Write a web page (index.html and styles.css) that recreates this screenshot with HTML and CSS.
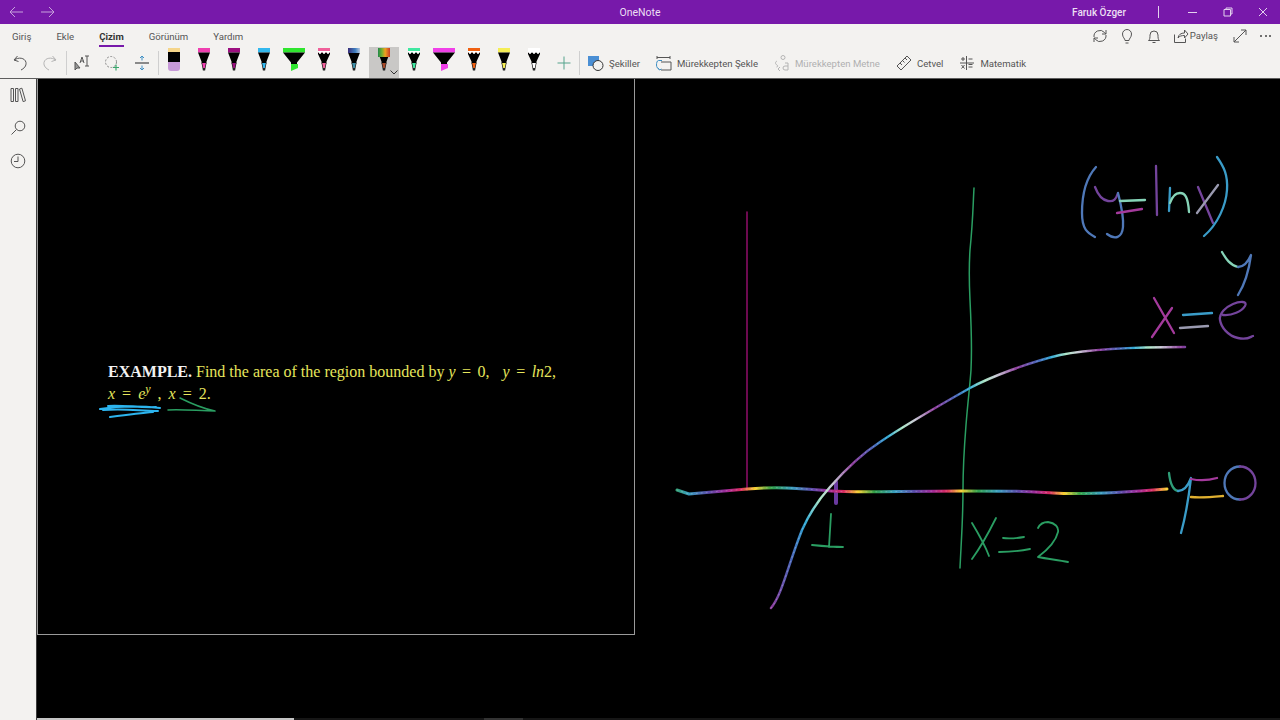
FILE: index.html
```html
<!DOCTYPE html>
<html lang="tr">
<head>
  <meta charset="UTF-8">
  <title>OneNote</title>
  <link rel="stylesheet" href="styles.css">
</head>
<body>
  <!-- shared shapes for the pen row -->
  <svg class="defs" width="0" height="0">
    <defs>
      <symbol id="pen" viewBox="0 0 24 24">
        <rect x="6" y="0" width="12" height="4.5" fill="currentColor"/>
        <path d="M6 4.5h12l-3.5 9v2h-5v-2z" fill="#000"/>
        <path d="M9.5 15h5l-1.400 7.500h-2.200z" fill="#222"/>
        <path d="M10.200 15h3.600l-1 5h-1.600z" fill="currentColor"/>
      </symbol>
      <symbol id="pen-glitter" viewBox="0 0 24 24">
        <rect x="6" y="0" width="12" height="5" fill="currentColor"/>
        <path d="M6 4l2 2 2-2 2 2 2-2 2 2 2-2v2l-3.500 7.500v2h-5v-2L6 6z" fill="#000"/>
        <path d="M6 4l2 2 2-2 2 2 2-2 2 2 2-2v-1H6z" fill="#fff"/>
        <path d="M9.500 15h5l-1.400 7.500h-2.200z" fill="#222"/>
        <path d="M10.200 15h3.600l-1 5h-1.600z" fill="currentColor"/>
      </symbol>
      <symbol id="marker" viewBox="0 0 24 24">
        <rect x="1" y="0" width="22" height="4.500" fill="currentColor"/>
        <path d="M1 4.500h22l-8 10v2H9v-2z" fill="#000"/>
        <path d="M9 16h7v4l-7 3z" fill="currentColor"/>
      </symbol>
      <linearGradient id="cap-rainbow" x1="0" x2="1" y1="0" y2="0">
        <stop offset="0" stop-color="#1f8a4a"/>
        <stop offset=".35" stop-color="#7fae2e"/>
        <stop offset=".6" stop-color="#f0a020"/>
        <stop offset="1" stop-color="#c83a28"/>
      </linearGradient>
      <linearGradient id="cap-galaxy" x1="0" x2="1" y1="0" y2="0">
        <stop offset="0" stop-color="#3a2f7a"/>
        <stop offset=".6" stop-color="#3f7fc0"/>
        <stop offset="1" stop-color="#b8c8e0"/>
      </linearGradient>
    </defs>
  </svg>

  <header class="titlebar">
    <div class="title-left">
      <svg class="cap-icon" viewBox="0 0 16 16"><path d="M15 8H2M7 3L2 8l5 5"/></svg>
      <svg class="cap-icon" viewBox="0 0 16 16"><path d="M1 8h13M9 3l5 5-5 5"/></svg>
    </div>
    <div class="title-name">OneNote</div>
    <div class="title-right">
      <span class="user-name">Faruk Özger</span>
      <span class="title-sep"></span>
      <button class="win-btn"><svg viewBox="0 0 10 10"><path d="M0 5.500h9"/></svg></button>
      <button class="win-btn"><svg viewBox="0 0 10 10"><path d="M1 2.500h6.500V9H1zM3 2.500V1h6v6H7.500"/></svg></button>
      <button class="win-btn"><svg viewBox="0 0 10 10"><path d="M1 1l8 8M9 1L1 9"/></svg></button>
    </div>
  </header>

  <nav class="tabs">
    <a class="tab">Giriş</a>
    <a class="tab">Ekle</a>
    <a class="tab active">Çizim</a>
    <a class="tab">Görünüm</a>
    <a class="tab">Yardım</a>
    <div class="tab-tools">
      <svg class="ico tab-ico" viewBox="0 0 16 16"><path d="M2 9a6 6 0 0 1 10.500-4.500L14 6M14 7a6 6 0 0 1-10.500 4.500L2 10M14 2v4h-4M2 14v-4h4"/></svg>
      <svg class="ico tab-ico" viewBox="0 0 16 16"><path d="M6 12.500c0-2-2.500-3-2.500-6.500a4.500 4.500 0 0 1 9 0c0 3.500-2.500 4.500-2.500 6.500zM6.500 15h3"/></svg>
      <svg class="ico tab-ico" viewBox="0 0 16 16"><path d="M2.500 12.500c1.500-1 1.500-3 1.500-5.500a4 4 0 0 1 8 0c0 2.500 0 4.500 1.500 5.500zM6.500 14.500h3"/></svg>
      <span class="share">
        <svg class="ico" viewBox="0 0 16 16"><path d="M1.500 6.500v8h11v-4M5 10c.5-3.500 3-5 6.500-5V2L15 6l-3.500 4V7.500C8.500 7.500 6.500 8 5 10z"/></svg>
        Paylaş
      </span>
      <svg class="ico tab-ico expand" viewBox="0 0 16 16"><path d="M2 14L14 2M9 2h5v5M2 9v5h5"/></svg>
      <span class="more"><i></i><i></i><i></i></span>
    </div>
  </nav>

  <div class="toolbar">
    <button class="tool"><svg class="ico" viewBox="0 0 16 16"><path d="M5.500 1L2 5l4.500 1.500M2.500 5C6 2 13 2.500 14 7.500c.5 3.500-2 6-5 7.500"/></svg></button>
    <button class="tool off"><svg class="ico" viewBox="0 0 16 16"><path d="M10.500 1L14 5 9.500 6.500M13.500 5C10 2 3 2.500 2 7.500c-.5 3.500 2 6 5 7.500"/></svg></button>
    <span class="sep"></span>
    <button class="tool"><svg class="ico" viewBox="0 0 16 16"><path class="fill-grey" d="M1 7v8l2-2 3 0z"/><path d="M6 8l2-6 2 6M7 6h2.500M11 1h4M13 1v10M11 11h4"/></svg></button>
    <button class="tool"><svg class="ico" viewBox="0 0 16 16"><circle class="dashed" cx="7" cy="7" r="5.500"/><path class="green" d="M12 9.500v6M9 12.500h6"/></svg></button>
    <button class="tool"><svg class="ico" viewBox="0 0 16 16"><path class="thick" d="M1 8h14"/><path class="blue" d="M8 1v4.500M6 3l2-2 2 2M8 10.500V15M6 13l2 2 2-2"/></svg></button>
    <span class="sep"></span>
    <button class="tool pen-tool"><svg class="pen" viewBox="0 0 24 24"><rect x="6" width="12" height="5" fill="#f5d58a"/><rect x="6" y="4" width="12" height="10" fill="#000"/><path d="M6 14h12v6a3 3 0 0 1-3 3H9a3 3 0 0 1-3-3z" fill="#c79ad8"/></svg></button>
    <button class="tool pen-tool c-pink"><svg class="pen"><use href="#pen"/></svg></button>
    <button class="tool pen-tool c-plum"><svg class="pen"><use href="#pen"/></svg></button>
    <button class="tool pen-tool c-sky"><svg class="pen"><use href="#pen"/></svg></button>
    <button class="tool pen-tool c-lime"><svg class="pen"><use href="#marker"/></svg></button>
    <button class="tool pen-tool c-rose"><svg class="pen"><use href="#pen-glitter"/></svg></button>
    <button class="tool pen-tool c-teal"><svg class="pen"><use href="#pen"/><rect x="6" width="12" height="5" fill="url(#cap-galaxy)"/></svg></button>
    <button class="tool pen-tool selected c-rust">
      <svg class="pen"><use href="#pen"/><rect x="6" width="12" height="9" fill="url(#cap-rainbow)"/></svg>
      <svg class="chev" viewBox="0 0 8 5"><path d="M.5.500L4 4 7.500.500"/></svg>
    </button>
    <button class="tool pen-tool c-mint"><svg class="pen"><use href="#pen-glitter"/></svg></button>
    <button class="tool pen-tool c-fuchsia"><svg class="pen"><use href="#marker"/></svg></button>
    <button class="tool pen-tool c-orange"><svg class="pen"><use href="#pen-glitter"/></svg></button>
    <button class="tool pen-tool c-yellow"><svg class="pen"><use href="#pen"/></svg></button>
    <button class="tool pen-tool c-white"><svg class="pen"><use href="#pen-glitter"/></svg></button>
    <button class="tool add-pen"><svg class="ico" viewBox="0 0 16 16"><path class="teal" d="M8 1.500v13M1.500 8h13"/></svg></button>
    <span class="sep"></span>
    <div class="text-tools">
      <button class="text-tool"><svg class="ico" viewBox="0 0 16 16"><path class="fill-blue" d="M0 1h11v10H0z"/><circle class="on-bg" cx="10" cy="10.500" r="5"/></svg>Şekiller</button>
      <button class="text-tool"><svg class="ico" viewBox="0 0 16 16"><path d="M1 1v3M14 1v3M1 2.500h13M5 7h10v8H5"/><path class="blue" d="M6 5.500H2.500C1 5.500.5 8 .5 10c0 2 1 3.500 3 4.500M1.500 12.500l2 2.500 2-1"/></svg>Mürekkepten Şekle</button>
      <button class="text-tool off"><svg class="ico" viewBox="0 0 16 16"><circle cx="9" cy="2.500" r="2"/><path d="M3 6c-2 1-2 3 0 4 1 .5 1 2-.5 2M11 8h3v7h-3a2 2 0 0 1 0-4h3M6 12l-2 2 2 2"/></svg>Mürekkepten Metne</button>
      <button class="text-tool"><svg class="ico" viewBox="0 0 16 16"><path d="M1 11L11 1l4 4L5 15zM4 8l2 2M6.500 5.500l2 2M9 3l2 2"/></svg>Cetvel</button>
      <button class="text-tool"><svg class="ico" viewBox="0 0 16 16"><path d="M7.500 1v14M1 8h14M2 4h4M4 2v4M9.500 4h4M2.500 10l3 3.500M5.500 10l-3 3.500M9.500 12h4M9.500 9.500h4"/></svg>Matematik</button>
    </div>
  </div>

  <div class="workspace">
    <aside class="sidebar">
      <svg class="ico" viewBox="0 0 16 16"><path d="M1 1.500h2.500v13H1zM5.500 1.500H8v13H5.500zM9.500 2l2.400-.8 3.600 12.600-2.400.8z"/></svg>
      <svg class="ico" viewBox="0 0 16 16"><circle cx="10" cy="6" r="4.800"/><path d="M6.500 9.500L1.500 14.500"/></svg>
      <svg class="ico" viewBox="0 0 16 16"><circle cx="8" cy="8" r="6.800"/><path d="M8 3.500V8.500H4"/></svg>
    </aside>

    <main class="canvas">
      <div class="page">
        <p class="problem">
          <b>EXAMPLE.</b> Find the area of the region bounded by <span class="math"><i>y</i> = 0,&nbsp; <i>y</i> = <i>ln</i>2,</span><br>
          <span class="math wide"><i>x</i> = <i>e<sup>y</sup></i> , <i>x</i> = 2.</span>
        </p>
      </div>

      <!-- viewBox is in page coordinates so strokes read the same as the screen -->
      <svg class="ink" viewBox="37 79 1243 641">
        <defs>
          <linearGradient id="rainbow" gradientUnits="userSpaceOnUse" x1="755" x2="858" y1="0" y2="0" spreadMethod="repeat">
            <stop offset="0" stop-color="#f8d030"/>
            <stop offset=".16" stop-color="#2e9e48"/>
            <stop offset=".36" stop-color="#3a9ec0"/>
            <stop offset=".55" stop-color="#5a4aa8"/>
            <stop offset=".72" stop-color="#a02a98"/>
            <stop offset=".86" stop-color="#d82a60"/>
            <stop offset="1" stop-color="#f8d030"/>
          </linearGradient>
          <linearGradient id="galaxy" gradientUnits="userSpaceOnUse" x1="771" x2="853" y1="0" y2="0" spreadMethod="repeat">
            <stop offset="0" stop-color="#8a3a9a"/>
            <stop offset=".25" stop-color="#4a66b8"/>
            <stop offset=".42" stop-color="#2fa8d4"/>
            <stop offset=".6" stop-color="#a8e4c4"/>
            <stop offset=".75" stop-color="#c8c8d4"/>
            <stop offset="1" stop-color="#8a3a9a"/>
          </linearGradient>
          <g id="axis-line"><path d="M677 490L689 494C700 493 712 492 747 489S805 489 831 491S900 491 961 491S1020 491 1053 493S1130 492 1167 489"/></g>
          <g id="curve-line"><path d="M771 608C782 595 788 565 802 530C810 512 820 498 830 487C845 470 860 455 880 442C905 425 940 405 970 388C990 377 1030 362 1060 355C1090 349 1140 347 1185 347"/></g>
          <g id="writing">
            <path class="h-blue" d="M1096 167C1086 178 1082 196 1082 213S1088 233 1095 237"/>
            <path class="h-purple" d="M1095 187C1098 195 1102 200 1108 201S1116 199 1118 193"/>
            <path class="h-blue" d="M1118 193C1121 205 1124 216 1123 227S1115 240 1107 234"/>
            <path class="h-mint" d="M1120 201L1145 200"/>
            <path class="h-magenta" d="M1117 213L1142 209"/>
            <path class="h-purple" d="M1156 166L1157 215"/>
            <path class="h-teal" d="M1170 188L1169 211"/>
            <path class="h-mint" d="M1170 203C1172 197 1175 193 1180 193S1188 197 1189 212"/>
            <path class="h-purple" d="M1198 187L1213 223"/>
            <path class="h-grey" d="M1218 185L1197 213"/>
            <path class="h-teal" d="M1217 157C1224 167 1228 175 1227 190S1218 224 1204 236"/>
            <path class="h-mint" d="M1222 252C1226 259 1230 265 1238 267"/>
            <path class="h-blue" d="M1238 267C1244 267 1248 262 1251 255C1249 270 1245 284 1238 295"/>
            <path class="h-magenta" d="M1154 298L1174 333M1172 308L1152 337"/>
            <path class="h-teal" d="M1183 315L1212 313"/>
            <path class="h-grey" d="M1180 328L1208 326"/>
            <path class="h-purple" d="M1223 315C1232 316 1242 311 1245 306S1240 301 1233 304S1219 313 1220 320S1228 336 1238 338S1250 337 1253 336"/>
            <path class="h-green" d="M1169 473C1170 482 1173 490 1178 491"/>
            <path class="h-teal" d="M1178 491C1184 491 1188 486 1191 478C1189 495 1186 515 1181 533"/>
            <path class="h-magenta" d="M1191 479C1200 481 1210 480 1217 478"/>
            <path class="h-yellow" d="M1191 497C1202 498 1212 497 1223 496"/>
            <path class="h-blue" d="M1240 466.500C1231 466.500 1224.500 474 1224.500 483S1231 499.500 1240 499.500"/>
            <path class="h-purple" d="M1240 466.500C1249 466.500 1255.500 474 1255.500 483S1249 499.500 1240 499.500"/>
          </g>
        </defs>

        <path class="stroke-plum" d="M747 212V490"/>
        <path class="stroke-green" d="M974 188C973 205 973 220 970 250C969 265 969 280 970 300C971 320 972 350 971 370C970 385 968 400 966 425C964 450 963 470 963 490C963 520 961 545 960 568"/>
        <path class="stroke-green wide" d="M831 514L829 547M812 545C822 546 833 547 843 547"/>
        <path class="stroke-green wide" d="M996 518C990 530 980 548 972 559M972 523C978 533 985 545 989 556M1003 538C1010 539 1018 538 1024 537M999 552C1009 552 1020 551 1030 549M1038 528C1040 524 1044 522 1048 522C1055 523 1059 527 1058 532C1056 541 1046 551 1038 557C1048 559 1058 560 1068 562"/>

        <path class="stroke-tick" d="M836 482V503"/>
        <use class="stroke-rainbow" href="#axis-line"/>
        <use class="stroke-galaxy" href="#curve-line"/>
        <use class="speck" href="#curve-line"/>
        <use class="speck" href="#axis-line"/>
        <use class="stroke-hand" href="#writing"/>

        <path class="stroke-sky" d="M100 409C120 406 140 406 160 408M108 406C125 405 140 408 156 407M103 410C125 408 140 411 158 411M110 417C125 415 140 413 153 412"/>
        <path class="stroke-green" d="M180 398C190 403 205 409 215 411C200 411 182 409 168 410"/>
      </svg>

      <div class="scrub"><span class="scrub-thumb"></span><span class="scrub-mark"></span></div>
    </main>
  </div>
</body>
</html>
```

FILE: styles.css
```css
* {
  box-sizing: border-box;
}
html, body {
  height: 100%;
}
body {
  margin: 0;
  width: 1280px;
  height: 720px;
  overflow: hidden;
  background: #000;
  font-family: Roboto, "Open Sans", sans-serif;
  font-size: 9.600px;
  color: #555;
}
button {
  padding: 0;
  border: none;
  background: none;
  font: inherit;
  color: inherit;
}
svg {
  display: block;
}
.defs {
  position: absolute;
}

/* title bar */
.titlebar {
  display: grid;
  grid-template-columns: 1fr auto 1fr;
  align-items: center;
  height: 24px;
  background: #7719aa;
  color: #ecdff3;
}
.title-left {
  display: flex;
  gap: 16px;
  padding-left: 8px;
}
.cap-icon {
  width: 16px;
  height: 16px;
  fill: none;
  stroke: #c8a2dc;
  stroke-width: 1;
}
.title-name {
  font-size: 10.500px;
}
.title-right {
  display: flex;
  align-items: center;
  justify-content: flex-end;
}
.user-name {
  font-size: 10px;
  font-weight: 500;
}
.title-sep {
  width: 1px;
  height: 12px;
  margin: 0 16px 0 32px;
  background: #e4d2ee;
}
.win-btn {
  display: flex;
  align-items: center;
  justify-content: center;
  width: 35px;
  height: 24px;
}
.win-btn svg {
  width: 10px;
  height: 10px;
  fill: none;
  stroke: #e4d2ee;
  stroke-width: 1;
}

/* tabs */
.tabs {
  display: flex;
  align-items: center;
  gap: 25px;
  height: 23px;
  padding-left: 12px;
  background: #f3f2f0;
}
.tab {
  position: relative;
  line-height: 23px;
  padding-top: 1px;
}
.tab.active {
  color: #333;
  font-weight: 700;
}
.tab.active::after {
  content: "";
  position: absolute;
  left: 0;
  right: 0;
  bottom: 1px;
  height: 2px;
  background: #7719aa;
}
.tab-tools {
  display: flex;
  align-items: center;
  margin-left: auto;
  padding-right: 8px;
}
.tab-ico {
  margin-right: 11px;
}
.share {
  display: flex;
  align-items: center;
  gap: 1px;
  margin-right: 14px;
}
.expand {
  margin-right: 12px;
}
.more {
  display: flex;
  gap: 2.500px;
  width: 12px;
}
.more i {
  width: 2px;
  height: 2px;
  border-radius: 50%;
  background: #444;
}

/* ribbon */
.toolbar {
  display: flex;
  align-items: center;
  height: 32px;
  padding-left: 4px;
  background: #f3f2f0;
  border-bottom: 1px solid #5e5e5e;
}
.ico {
  width: 16px;
  height: 16px;
  fill: none;
  stroke: #555;
  stroke-width: 1;
}
.tool {
  display: flex;
  align-items: center;
  justify-content: center;
  width: 30px;
  height: 31px;
}
.tool:first-child {
  width: 31px;
}
.tool.off .ico {
  stroke: #b4b4b4;
}
.sep {
  flex: none;
  width: 1px;
  height: 24px;
  margin-left: 1px;
  background: #cfcfcf;
}
.fill-grey {
  fill: #999;
}
.dashed {
  stroke: #8a8a8a;
  stroke-dasharray: 2 1.500;
}
.ico .green {
  stroke: #3aa76d;
  stroke-width: 1.200;
}
.ico .blue {
  stroke: #3f8fc4;
}
.ico .teal {
  stroke: #55a38c;
}
.ico .thick {
  stroke: #8a8a8a;
  stroke-width: 2;
}
.fill-blue {
  fill: #4a8fd4;
  stroke: none;
}
.on-bg {
  fill: #f3f2f0;
  stroke: #333;
}
.pen-tool {
  position: relative;
  align-items: flex-start;
  padding-top: 1px;
}
.pen {
  width: 24px;
  height: 24px;
}
.pen-tool.selected {
  background: #c9c8c6;
}
.chev {
  position: absolute;
  right: 1px;
  bottom: 3px;
  width: 8px;
  height: 5px;
  fill: none;
  stroke: #333;
}
.add-pen {
  width: 29px;
}
.c-pink { color: #ef3fb0; }
.c-plum { color: #9c0f80; }
.c-sky { color: #32b8ee; }
.c-lime { color: #2fe52f; }
.c-rose { color: #f0609a; }
.c-teal { color: #3f90a8; }
.c-rust { color: #a84a28; }
.c-mint { color: #3fe8a0; }
.c-fuchsia { color: #f040e8; }
.c-orange { color: #f06010; }
.c-yellow { color: #f5ee55; }
.c-white { color: #fff; }
.text-tools {
  display: flex;
  gap: 2px;
  margin-left: 1px;
  padding-top: 1px;
}
.text-tool {
  display: flex;
  align-items: center;
  gap: 5px;
  padding: 0 7px;
  white-space: nowrap;
}
.text-tool.off {
  color: #b0b0b0;
}
.text-tool.off .ico {
  stroke: #b4b4b4;
}

/* main area */
.workspace {
  display: flex;
  height: 641px;
}
.sidebar {
  display: flex;
  flex-direction: column;
  align-items: center;
  gap: 17px;
  flex: none;
  width: 37px;
  padding: 8px 1px 0 0;
  background: #f3f2f0;
  border-right: 1px solid #3c3c3c;
}
.canvas {
  position: relative;
  flex: 1;
  background: #000;
}
.page {
  width: 598px;
  height: 556px;
  padding: 282px 0 0 70px;
  border-left: 1px solid #9a9a9a;
  border-right: 1px solid #9a9a9a;
  border-bottom: 1px solid #9a9a9a;
}
.problem {
  margin: 0;
  font-family: "Liberation Serif", serif;
  font-size: 16px;
  line-height: 22px;
  color: #e6e65c;
  white-space: nowrap;
}
.problem b {
  color: #f2f2f2;
}
.math {
  word-spacing: 2.500px;
}
.math.wide {
  word-spacing: 3px;
}
.problem sup {
  font-size: 12px;
  line-height: 0;
}

/* ink layer */
.ink {
  position: absolute;
  left: 0;
  top: 0;
  width: 1243px;
  height: 641px;
  fill: none;
  stroke-linecap: round;
  stroke-linejoin: round;
}
.stroke-plum {
  stroke: #a8107a;
  stroke-width: 1.300;
}
.stroke-green {
  stroke: #2a9e62;
  stroke-width: 1.500;
}
.stroke-green.wide {
  stroke-width: 1.800;
}
.stroke-tick {
  stroke: #6a3aa0;
  stroke-width: 4;
}
.stroke-rainbow {
  stroke: url(#rainbow);
  stroke-width: 3;
}
.stroke-galaxy {
  stroke: url(#galaxy);
  stroke-width: 2.500;
}
.stroke-hand {
  stroke-width: 2.300;
}
.h-blue { stroke: #4f78b8; }
.h-purple { stroke: #74449c; }
.h-mint { stroke: #86d4b8; }
.h-teal { stroke: #3a9cc8; }
.h-magenta { stroke: #a43a9c; }
.h-grey { stroke: #9a9ab0; }
.h-green { stroke: #2f9e78; }
.h-yellow { stroke: #e0b030; }
.stroke-sky {
  stroke: #2cb4ee;
  stroke-width: 2;
}
.speck {
  stroke: #fff;
  stroke-width: 1;
  stroke-opacity: .25;
  stroke-dasharray: 1 4;
}

.scrub {
  position: absolute;
  left: 0;
  right: 0;
  bottom: 0;
  height: 2px;
  background: #161616;
}
.scrub-thumb {
  position: absolute;
  left: 0;
  width: 257px;
  height: 2px;
  background: #c4c4c4;
}
.scrub-mark {
  position: absolute;
  left: 447px;
  width: 39px;
  height: 2px;
  background: #333;
}
```
